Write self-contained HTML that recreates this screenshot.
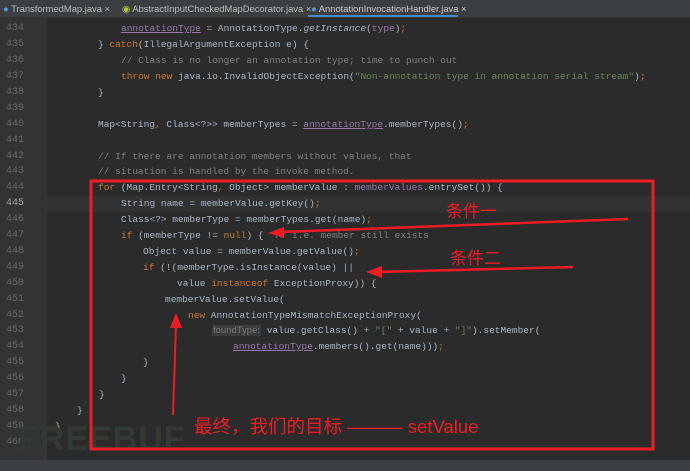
<!DOCTYPE html>
<html><head><meta charset="utf-8"><style>
body{margin:0;width:690px;height:471px;background:#2b2b2b;overflow:hidden;position:relative;font-family:"Liberation Mono",monospace;}
.tabs{position:absolute;left:0;top:0;width:690px;height:17px;background:#3c3f41;border-bottom:1px solid #323232;font-family:"Liberation Sans",sans-serif;font-size:9.4px;color:#bbb;z-index:3}
.tab{position:absolute;top:3px;white-space:nowrap}
.gut{position:absolute;left:0;top:18px;width:47px;height:442px;background:#313335}
.ln{position:absolute;left:6px;font-size:10px;color:#676a6d;line-height:16px}
.c{position:absolute;font-size:9.5px;color:#a9b7c6;white-space:pre;line-height:16px}
.k{color:#cc7832}.s{color:#6a8759}.cm{color:#808080}.p{color:#9876aa}.i{font-style:italic}.u{text-decoration:underline}
.cur{position:absolute;left:47px;top:196px;width:643px;height:16px;background:#323232}
.cn{position:absolute;color:#ee1c25;font-family:"Liberation Sans","Noto Sans CJK SC",sans-serif;font-size:17px;white-space:nowrap}
.bot{position:absolute;left:0;top:460px;width:690px;height:11px;background:#3c3f41}
</style></head><body>
<div class="tabs">
<span class="tab" style="left:3px"><span style="color:#4a9fd8">●</span> TransformedMap.java ×</span>
<span class="tab" style="left:122px"><span style="color:#b8c040">◉</span> AbstractInputCheckedMapDecorator.java ×</span>
<span class="tab" style="left:311px;color:#ccc"><span style="color:#4a9fd8">●</span> AnnotationInvocationHandler.java ×</span>
<div style="position:absolute;left:308px;top:15px;width:150px;height:2px;background:#4a88c7"></div>
</div>
<div class="gut"></div>
<div class="cur"></div>
<div class="ln" style="top:5px">433</div>
<div class="ln" style="top:21px">434</div><div class="ln" style="top:37px">435</div><div class="ln" style="top:53px">436</div><div class="ln" style="top:69px">437</div><div class="ln" style="top:85px">438</div><div class="ln" style="top:101px">439</div><div class="ln" style="top:117px">440</div><div class="ln" style="top:133px">441</div><div class="ln" style="top:149px">442</div><div class="ln" style="top:164px">443</div><div class="ln" style="top:180px">444</div><div class="ln" style="top:196px;color:#a4a3a3">445</div><div class="ln" style="top:212px">446</div><div class="ln" style="top:228px">447</div><div class="ln" style="top:244px">448</div><div class="ln" style="top:260px">449</div><div class="ln" style="top:276px">450</div><div class="ln" style="top:292px">451</div><div class="ln" style="top:308px">452</div><div class="ln" style="top:323px">453</div><div class="ln" style="top:339px">454</div><div class="ln" style="top:355px">455</div><div class="ln" style="top:371px">456</div><div class="ln" style="top:387px">457</div><div class="ln" style="top:403px">458</div><div class="ln" style="top:419px">459</div><div class="ln" style="top:435px">460</div>

<div class="c" style="left:98px;top:5px"><span class="k">try</span> {</div>
<div class="c" style="left:121px;top:21px"><span class="p u">annotationType</span> = AnnotationType.<span class="i">getInstance</span>(<span class="p">type</span>)<span class="k">;</span></div>
<div class="c" style="left:98px;top:37px">} <span class="k">catch</span>(IllegalArgumentException e) {</div>
<div class="c cm" style="left:121px;top:53px">// Class is no longer an annotation type; time to punch out</div>
<div class="c" style="left:121px;top:69px"><span class="k">throw new</span> java.io.InvalidObjectException(<span class="s">"Non-annotation type in annotation serial stream"</span>)<span class="k">;</span></div>
<div class="c" style="left:98px;top:85px">}</div>
<div class="c" style="left:98px;top:117px">Map&lt;String<span class="k">,</span> Class&lt;?&gt;&gt; memberTypes = <span class="p u">annotationType</span>.memberTypes()<span class="k">;</span></div>
<div class="c cm" style="left:98px;top:149px">// If there are annotation members without values, that</div>
<div class="c cm" style="left:98px;top:164px">// situation is handled by the invoke method.</div>
<div class="c" style="left:98px;top:180px"><span class="k">for</span> (Map.Entry&lt;String<span class="k">,</span> Object&gt; memberValue : <span class="p">memberValues</span>.entrySet()) {</div>
<div class="c" style="left:121px;top:196px">String name = memberValue.getKey()<span class="k">;</span></div>
<div class="c" style="left:121px;top:212px">Class&lt;?&gt; memberType = memberTypes.get(name)<span class="k">;</span></div>
<div class="c" style="left:121px;top:228px"><span class="k">if</span> (memberType != <span class="k">null</span>) {  <span class="cm">// i.e. member still exists</span></div>
<div class="c" style="left:143px;top:244px">Object value = memberValue.getValue()<span class="k">;</span></div>
<div class="c" style="left:143px;top:260px"><span class="k">if</span> (!(memberType.isInstance(value) ||</div>
<div class="c" style="left:177px;top:276px">value <span class="k">instanceof</span> ExceptionProxy)) {</div>
<div class="c" style="left:165px;top:292px">memberValue.setValue(</div>
<div class="c" style="left:188px;top:308px"><span class="k">new</span> AnnotationTypeMismatchExceptionProxy(</div>
<div class="c" style="left:212px;top:323px"><span style="font-family:'Liberation Sans',sans-serif;color:#787878;background:#3b3b3b;font-size:9.5px;padding:0 1px">foundType:</span> value.getClass() + <span class="s">"["</span> + value + <span class="s">"]"</span>).setMember(</div>
<div class="c" style="left:233px;top:339px"><span class="p u">annotationType</span>.members().get(name)))<span class="k">;</span></div>
<div class="c" style="left:143px;top:355px">}</div>
<div class="c" style="left:121px;top:371px">}</div>
<div class="c" style="left:99px;top:387px">}</div>
<div class="c" style="left:77px;top:403px">}</div>
<div class="c" style="left:55px;top:419px">}</div>

<div style="position:absolute;left:18px;top:420px;font-family:'Liberation Sans',sans-serif;font-weight:bold;font-size:34px;color:#333a33;letter-spacing:1px">FREEBUF</div>
<div class="bot"></div>

<svg width="690" height="471" style="position:absolute;left:0;top:0" fill="none">
<rect x="91" y="181" width="562" height="268" stroke="#ee1c25" stroke-width="3"/>
<line x1="628" y1="219" x2="280" y2="232" stroke="#ee1c25" stroke-width="2.5"/>
<polygon points="268,233 284,227 284,238" fill="#ee1c25"/>
<line x1="573" y1="267" x2="378" y2="272" stroke="#ee1c25" stroke-width="2.5"/>
<polygon points="366,272 382,266 382,278" fill="#ee1c25"/>
<line x1="173" y1="415" x2="176" y2="325" stroke="#ee1c25" stroke-width="2"/>
<polygon points="176,313 170,328 182,328" fill="#ee1c25"/>
</svg>
<div class="cn" style="left:446px;top:197px">条件一</div>
<div class="cn" style="left:450px;top:244px">条件二</div>
<div class="cn" style="left:194px;top:413px;font-size:18.5px">最终，我们的目标 ——— setValue</div>
</body></html>
